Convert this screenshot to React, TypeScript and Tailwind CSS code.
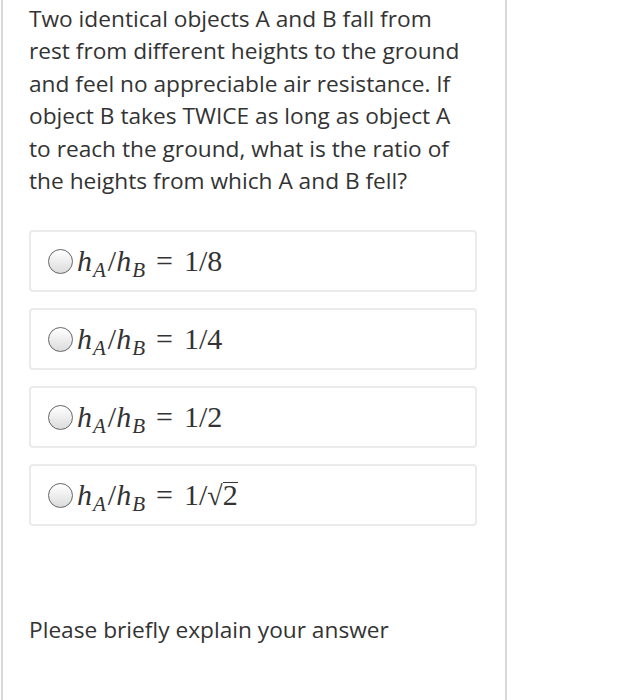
import React from 'react';

const options = ['1/8', '1/4', '1/2', 'sqrt'];

function Ratio({ value }: { value: string }) {
  return (
    <span className="flex items-baseline text-[30px] leading-none text-[#333]" style={{ fontFamily: '"Liberation Serif", "DejaVu Serif", serif' }}>
      <i>h</i>
      <i className="text-[21px] relative top-[6px] ml-[1px]">A</i>
      <span className="ml-[2px]">/</span>
      <i>h</i>
      <i className="text-[21px] relative top-[6px] ml-[1px]">B</i>
      <span className="mx-[11px]">=</span>
      {value === 'sqrt' ? (
        <span className="flex items-baseline">
          <span>1/</span>
          <span className="text-[28px]">√</span>
          <span className="border-t-[1.5px] border-[#333] leading-[24px]">2</span>
        </span>
      ) : (
        <span>{value}</span>
      )}
    </span>
  );
}

export default function App() {
  return (
    <div className="w-[638px] h-[700px] bg-white flex" style={{ fontFamily: '"Open Sans", "Noto Sans", sans-serif' }}>
      <div className="w-[2px] bg-[#d9d9d9] ml-[1px]" />
      <div className="w-[502px] pl-[26px] pr-[26px] pt-[3px] text-[#333]">
        <p className="text-[22.7px] leading-[32.4px]">
          Two identical objects A and B fall from<br />
          rest from different heights to the ground<br />
          and feel no appreciable air resistance. If<br />
          object B takes TWICE as long as object A<br />
          to reach the ground, what is the ratio of<br />
          the heights from which A and B fell?
        </p>
        <div className="mt-[33px] flex flex-col gap-[16px] w-[448px]">
          {options.map((o) => (
            <div key={o} className="h-[62px] border-[2px] border-[#ebebeb] rounded-[4px] flex items-center pl-[17px]">
              <span className="w-[25px] h-[25px] rounded-full border-[1.5px] border-[#666] bg-gradient-to-b from-white to-[#dcdcdc] mr-[4px] shrink-0" />
              <Ratio value={o} />
            </div>
          ))}
        </div>
        <p className="mt-[88px] text-[22.7px] leading-[32px]">Please briefly explain your answer</p>
      </div>
      <div className="w-[2px] bg-[#d9d9d9]" />
    </div>
  );
}
